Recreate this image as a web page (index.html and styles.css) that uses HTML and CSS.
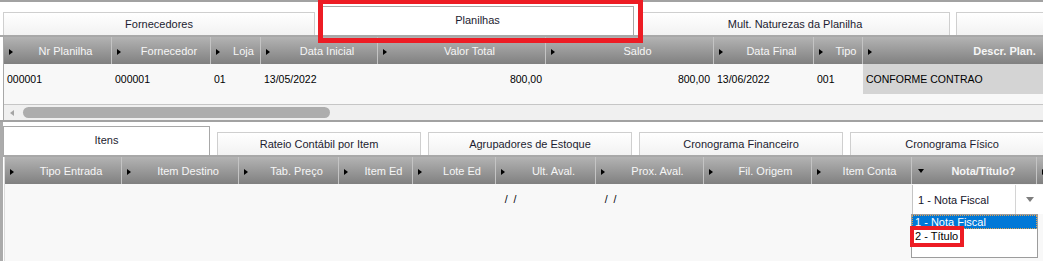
FILE: index.html
```html
<!DOCTYPE html>
<html lang="pt">
<head>
<meta charset="utf-8">
<title>Planilhas</title>
<link rel="stylesheet" href="styles.css">
</head>
<body>
<div class="screen">
  <div class="topline"></div>
  <section class="panel panel-top">
    <div class="tabs tabs-top">
      <div class="tab tt1">Fornecedores</div>
      <div class="tab sel tt2">Planilhas</div>
      <div class="tab tt3">Mult. Naturezas da Planilha</div>
      <div class="tab tt4"></div>
    </div>
    <div class="tabline"></div>
    <div class="grid grid-top">
      <div class="gh cols-top">
        <div class="hc"><i class="tri"></i><span>Nr Planilha</span></div>
        <div class="hc"><i class="tri"></i><span>Fornecedor</span></div>
        <div class="hc"><i class="tri"></i><span>Loja</span></div>
        <div class="hc"><i class="tri"></i><span>Data Inicial</span></div>
        <div class="hc"><i class="tri"></i><span>Valor Total</span></div>
        <div class="hc"><i class="tri"></i><span>Saldo</span></div>
        <div class="hc"><i class="tri"></i><span>Data Final</span></div>
        <div class="hc"><i class="tri"></i><span>Tipo</span></div>
        <div class="hc bold"><i class="tri"></i><span>Descr. Plan.</span></div>
      </div>
      <div class="gbody gbody-top">
        <div class="row cols-top">
          <div class="cell">000001</div>
          <div class="cell">000001</div>
          <div class="cell">01</div>
          <div class="cell">13/05/2022</div>
          <div class="cell num">800,00</div>
          <div class="cell num">800,00</div>
          <div class="cell">13/06/2022</div>
          <div class="cell">001</div>
          <div class="cell selcell">CONFORME CONTRAO</div>
        </div>
      </div>
      <div class="hscroll">
        <i class="sarrow"></i>
        <div class="thumb"></div>
      </div>
    </div>
  </section>
  <div class="sep"></div>
  <section class="panel panel-bottom">
    <div class="tabs tabs-bottom">
      <div class="tab sel tb1">Itens</div>
      <div class="tab tb2">Rateio Contábil por Item</div>
      <div class="tab tb2">Agrupadores de Estoque</div>
      <div class="tab tb2">Cronograma Financeiro</div>
      <div class="tab tb2">Cronograma Físico</div>
    </div>
    <div class="tabline"></div>
    <div class="grid grid-bottom">
      <div class="gh cols-bottom">
        <div class="hc"><i class="tri"></i><span>Tipo Entrada</span></div>
        <div class="hc"><i class="tri"></i><span>Item Destino</span></div>
        <div class="hc"><i class="tri"></i><span>Tab. Preço</span></div>
        <div class="hc"><i class="tri"></i><span>Item Ed</span></div>
        <div class="hc"><i class="tri"></i><span>Lote Ed</span></div>
        <div class="hc"><i class="tri"></i><span>Ult. Aval.</span></div>
        <div class="hc"><i class="tri"></i><span>Prox. Aval.</span></div>
        <div class="hc"><i class="tri"></i><span>Fil. Origem</span></div>
        <div class="hc"><i class="tri"></i><span>Item Conta</span></div>
        <div class="hc bold"><i class="tri-down"></i><span>Nota/Título?</span></div>
        <div class="hc"><i class="tri"></i><span></span></div>
      </div>
      <div class="gbody gbody-bottom">
        <div class="row cols-bottom">
          <div class="cell"></div>
          <div class="cell"></div>
          <div class="cell"></div>
          <div class="cell"></div>
          <div class="cell"></div>
          <div class="cell date">  /  /</div>
          <div class="cell date">  /  /</div>
          <div class="cell"></div>
          <div class="cell"></div>
          <div class="cell combo-cell">
            <div class="combo">
              <div class="combo-text">1 - Nota Fiscal</div>
              <div class="combo-btn"><i class="combo-arrow"></i></div>
            </div>
          </div>
          <div class="cell"></div>
        </div>
      </div>
    </div>
  </section>

  <ul class="dropdown">
    <li class="opt active">1 - Nota Fiscal</li>
    <li class="opt">2 - Título</li>
  </ul>
  <div class="mark mark-tab"></div>
  <div class="mark mark-opt"></div>
</div>
</body>
</html>
```

FILE: styles.css
```css
* { box-sizing: border-box; }

html, body {
  margin: 0;
  padding: 0;
  background: #ffffff;
}

body {
  font-family: "Liberation Sans", Arial, sans-serif;
  font-size: 11px;
  color: #000;
}

.screen {
  position: relative;
  width: 1043px;
  height: 261px;
  overflow: hidden;
  background: #ffffff;
}

.topline {
  height: 2px;
  background: #a2a2a2;
}

.tabs {
  display: flex;
  align-items: flex-end;
  height: 33px;
  padding-left: 3px;
  white-space: nowrap;
}

.tabs-top { gap: 6px; }
.tabs-bottom { gap: 7px; padding-left: 0; }

.tab {
  flex: none;
  height: 23px;
  border: 1px solid #cfcfcf;
  border-bottom: none;
  background: linear-gradient(#ffffff, #f2f2f2);
  display: flex;
  align-items: center;
  justify-content: center;
  color: #1c1c30;
  font-size: 11px;
}

.tab.sel {
  height: 29px;
  background: #ffffff;
  border-color: #a8a8a8;
  padding-bottom: 2px;
}

.tt1 { width: 312px; }
.tt2 { width: 313px; }
.tt3 { width: 310px; }
.tt4 { width: 310px; }

.tb1 { width: 207px; }
.tb2 { width: 204px; }

.tabline {
  height: 2px;
  background: #a8a8a8;
}

.grid {
  border-left: 1px solid #a8a8a8;
  margin-left: 3px;
}

.cols-top {
  display: grid;
  grid-template-columns: 108px 99px 50px 117px 168px 168px 100px 49px 268px;
}

.cols-bottom {
  display: grid;
  grid-template-columns: 117px 117px 100px 74px 83px 100px 108px 108px 100px 125px 40px;
}

.gh {
  height: 27px;
  background: linear-gradient(#b3b3b3 0%, #979797 55%, #808080 100%);
  color: #f6f6f6;
}

.hc {
  display: flex;
  align-items: center;
  padding-left: 5px;
  border-right: 1px solid #c4c4c4;
  white-space: nowrap;
  overflow: hidden;
  font-size: 11px;
}

.hc span {
  flex: 1;
  text-align: center;
  padding-left: 7px;
}

.hc.bold { font-weight: bold; }

.tri {
  flex: none;
  width: 0;
  height: 0;
  border-left: 4px solid #000;
  border-top: 3px solid transparent;
  border-bottom: 3px solid transparent;
  margin-top: 2px;
}

.tri-down {
  flex: none;
  width: 0;
  height: 0;
  border-top: 4px solid #000;
  border-left: 3.5px solid transparent;
  border-right: 3.5px solid transparent;
  margin-left: 1px;
}

.gbody {
  background: #f8f8f8;
}

.gbody-top { height: 40px; }
.gbody-bottom { height: 77px; }

.row {
  height: 30px;
}

.cell {
  display: flex;
  align-items: center;
  padding-left: 3px;
  white-space: nowrap;
  font-size: 10.5px;
  color: #000;
}

.cell.num {
  justify-content: flex-end;
  padding-right: 4px;
}

.cell.selcell {
  background: #d4d4d4;
}

.cell.date {
  white-space: pre;
}

.hscroll {
  height: 16px;
  border-top: 1px solid #c6c6c6;
  background: #f0f0f0;
  display: flex;
  align-items: center;
  padding-left: 6px;
}

.sarrow {
  flex: none;
  width: 0;
  height: 0;
  border-right: 4px solid #a4a4a4;
  border-top: 3px solid transparent;
  border-bottom: 3px solid transparent;
}

.thumb {
  flex: none;
  width: 307px;
  height: 11px;
  margin-left: 9px;
  border-radius: 5.5px;
  background: #adadad;
}

.sep {
  height: 2px;
  background: #a2a2a2;
}

.panel-bottom {
  border-left: 3px solid #ababab;
  height: 139px;
}

.grid-bottom {
  margin-left: 1px;
  border-left: 1px solid #dcdcdc;
}

.combo-cell {
  align-items: flex-start;
  padding-left: 0;
  overflow: visible;
}

.combo {
  flex: none;
  width: 131px;
  height: 29px;
  margin-top: 1px;
  background: #ffffff;
  border-left: 1px solid #c4c4c4;
  display: flex;
}

.combo-text {
  width: 103px;
  border-right: 1px solid #d4d4d4;
  padding-left: 5px;
  display: flex;
  align-items: center;
  font-size: 11px;
  color: #14142a;
}

.combo-btn {
  flex: 1;
  display: flex;
  align-items: center;
  justify-content: center;
}

.combo-arrow {
  width: 0;
  height: 0;
  border-top: 5px solid #7e7e7e;
  border-left: 4px solid transparent;
  border-right: 4px solid transparent;
}

.dropdown {
  position: absolute;
  left: 911px;
  top: 214px;
  width: 127px;
  height: 44px;
  margin: 0;
  padding: 0;
  list-style: none;
  background: #ffffff;
  border: 1px solid #9c9c9c;
  font-size: 11px;
}

.opt {
  height: 14px;
  line-height: 14px;
  padding-left: 3px;
  color: #000;
  white-space: nowrap;
}

.opt.active {
  background: #0078d7;
  color: #ffffff;
  outline: 1px dotted #e0a050;
  outline-offset: -1px;
}

.mark {
  position: absolute;
  border-style: solid;
  border-color: #ed1c24;
}

.mark-tab {
  left: 318px;
  top: -1px;
  width: 325px;
  height: 44px;
  border-width: 5px;
}

.mark-opt {
  left: 910px;
  top: 226px;
  width: 54px;
  height: 21px;
  border-width: 4px;
}
```
